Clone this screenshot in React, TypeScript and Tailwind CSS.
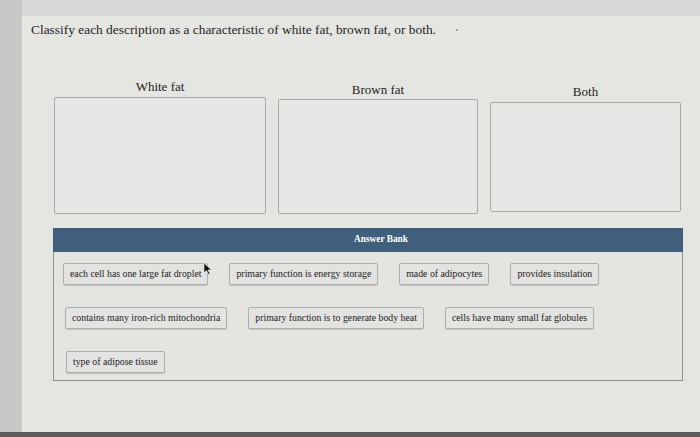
import React from "react";

const serif = { fontFamily: '"Liberation Serif", "Times New Roman", serif' };

function Chip({ children }: { children: React.ReactNode }) {
  return (
    <div className="h-[22px] px-[6px] flex items-center border border-[#aeaeac] bg-[#e3e3e1] rounded-[2px] shadow-[0_1px_1px_rgba(0,0,0,0.15)] text-[9.8px] text-[#222] whitespace-nowrap">
      {children}
    </div>
  );
}

export default function App() {
  return (
    <div className="w-[700px] h-[437px] overflow-hidden bg-[#d2d2d0] flex flex-col" style={serif}>
      <div className="flex-1 flex">
        <div className="w-[22px] bg-[#c8c8c6]" />
        <div className="flex-1 flex flex-col">
          <div className="h-[16px] bg-[#d7d7d5]" />
          <div className="flex-1 bg-[#e5e5e2] flex flex-col relative">
            <div className="pl-[9px] pt-[4px] flex items-center">
              <span className="text-[13.4px] text-[#1e1e1e]">
                Classify each description as a characteristic of white fat, brown fat, or both.
              </span>
              <span className="ml-[20px] w-[2px] h-[2px] rounded-full bg-[#888]" />
            </div>

            <div className="ml-[32px] mt-[37px] flex gap-[12px] items-start">
              <div className="w-[212px] flex flex-col items-center">
                <div className="h-[16px] text-[13px] text-[#1e1e1e]">White fat</div>
                <div className="mt-[4px] w-full h-[117px] border border-[#a9a9a7] bg-[#e7e7e5] rounded-[2px]" />
              </div>
              <div className="w-[200px] mt-[3px] flex flex-col items-center">
                <div className="h-[16px] text-[13px] text-[#1e1e1e]">Brown fat</div>
                <div className="mt-[3px] w-full h-[115px] border border-[#a9a9a7] bg-[#e7e7e5] rounded-[2px]" />
              </div>
              <div className="w-[191px] mt-[5px] flex flex-col items-center">
                <div className="h-[16px] text-[13px] text-[#1e1e1e]">Both</div>
                <div className="mt-[4px] w-full h-[110px] border border-[#a9a9a7] bg-[#e7e7e5] rounded-[2px]" />
              </div>
            </div>

            <div className="ml-[31px] mt-[14px] w-[630px] flex flex-col">
              <div className="h-[24px] bg-[#3f5f7c] flex items-center justify-center pl-[26px]">
                <span className="text-[9.3px] font-bold text-white">Answer Bank</span>
              </div>
              <div className="h-[129px] border border-t-0 border-[#8e8e8c] bg-[#e4e4e1] pl-[9px] pt-[11px] flex flex-col gap-[22px] relative">
                <div className="flex gap-[21px]">
                  <Chip>each cell has one large fat droplet</Chip>
                  <Chip>primary function is energy storage</Chip>
                  <Chip>made of adipocytes</Chip>
                  <Chip>provides insulation</Chip>
                </div>
                <div className="flex gap-[21px] pl-[2px]">
                  <Chip>contains many iron-rich mitochondria</Chip>
                  <Chip>primary function is to generate body heat</Chip>
                  <Chip>cells have many small fat globules</Chip>
                </div>
                <div className="flex gap-[21px] pl-[3px]">
                  <Chip>type of adipose tissue</Chip>
                </div>
                <svg className="absolute left-[150px] top-[11px]" width="8" height="12" viewBox="0 0 8 12">
                  <path d="M0 0 L0 10 L2.5 7.5 L4.5 11.5 L6 10.8 L4 7 L7.5 7 Z" fill="#111" stroke="#fff" strokeWidth="0.6" />
                </svg>
              </div>
            </div>
          </div>
        </div>
      </div>
      <div className="h-[5px] bg-[#5c5c5a]" />
    </div>
  );
}
